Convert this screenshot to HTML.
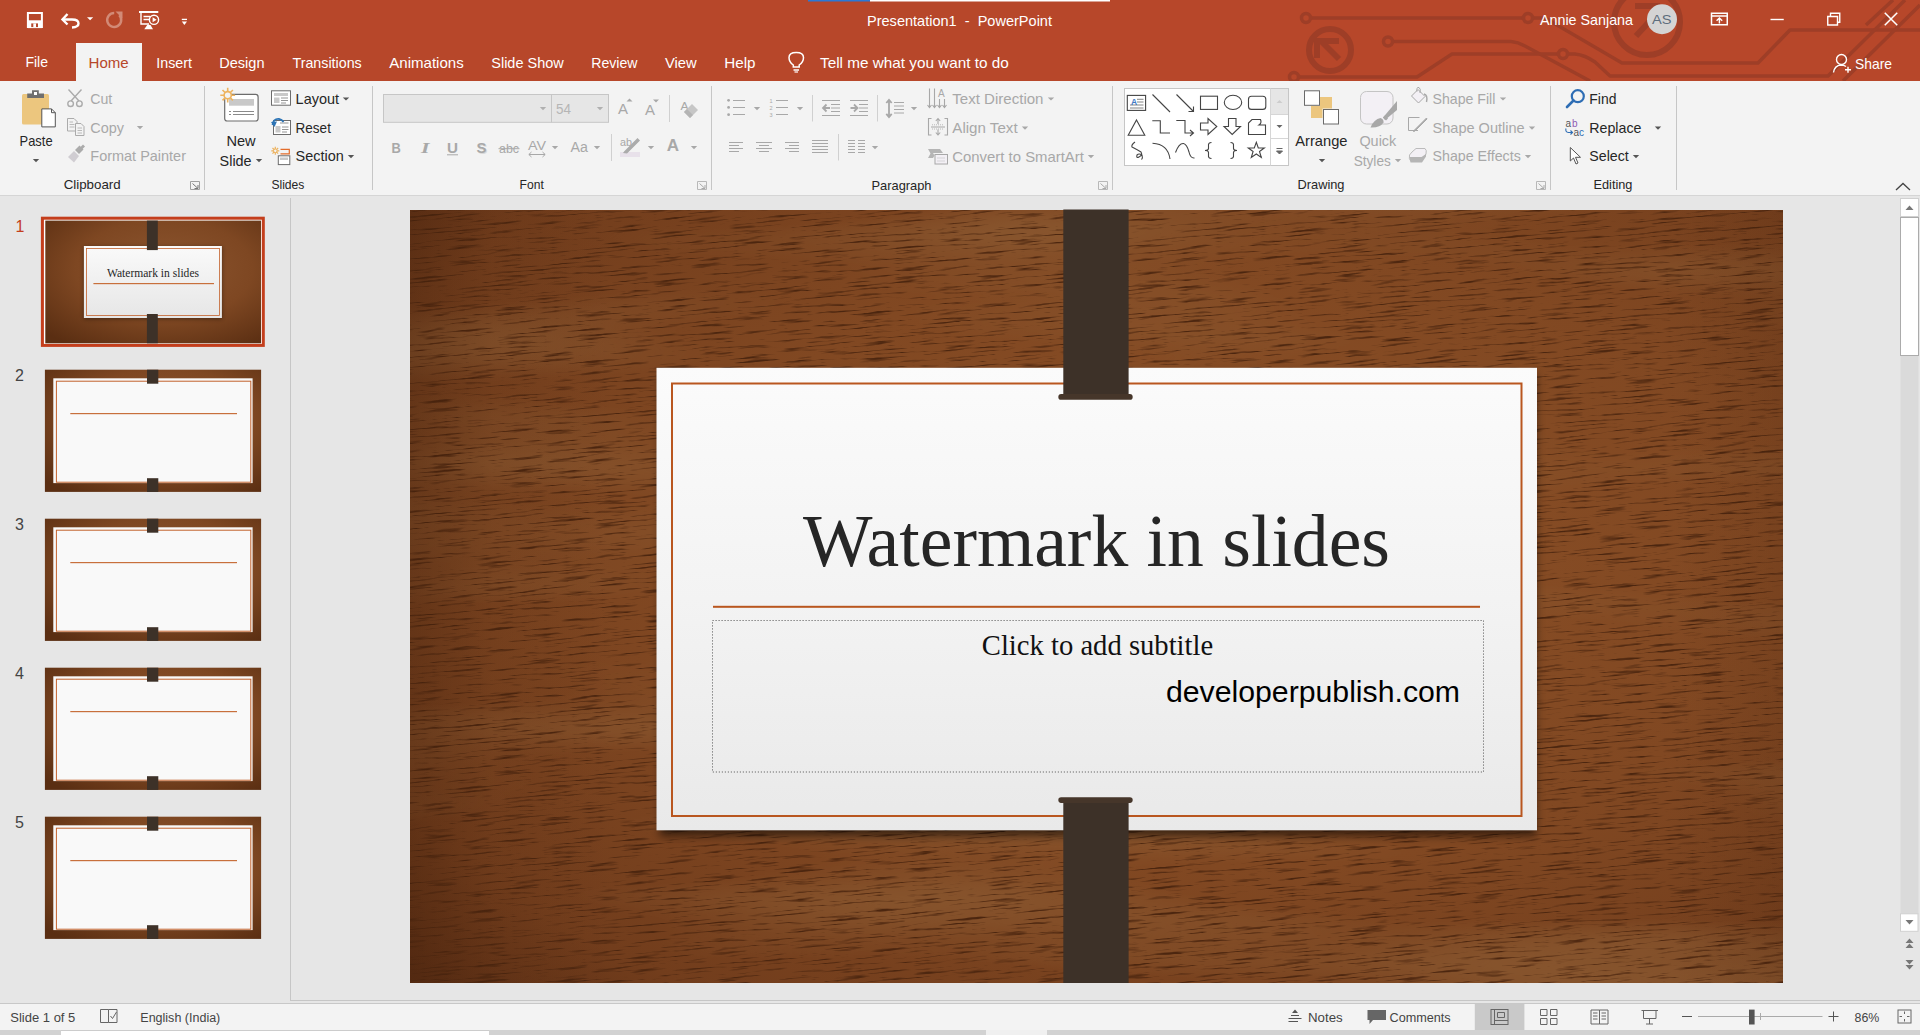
<!DOCTYPE html>
<html><head><meta charset="utf-8">
<style>
*{margin:0;padding:0;box-sizing:border-box}
html,body{width:1920px;height:1035px;overflow:hidden;background:#e6e6e6;font-family:"Liberation Sans",sans-serif}
.a{position:absolute}
#tb{left:0;top:0;width:1920px;height:81px;background:#b7472a}
#rib{left:0;top:81px;width:1920px;height:115px;background:#f3f3f3;border-bottom:1px solid #d5d5d5}
#main{left:0;top:196px;width:1920px;height:808px;background:#e6e6e6}
#status{left:0;top:1003px;width:1920px;height:27px;background:#f3f3f3;border-top:1px solid #c8c8c8}
#bot{left:0;top:1030px;width:1920px;height:5px;background:#d4d4d4}
.wt{color:#fff;font-size:14.5px;white-space:nowrap}
.tab{top:54px;color:#fff;font-size:14.5px;white-space:nowrap}
.rt{font-size:14.5px;color:#262626;white-space:nowrap}
.dis{color:#a6a6a6}
.gl{font-size:14.5px;color:#444;white-space:nowrap;top:177px}
.sep{top:86px;width:1px;height:104px;background:#d8d8d8}
.dd{width:0;height:0;border-left:3.5px solid transparent;border-right:3.5px solid transparent;border-top:3.5px solid #666}
.ddd{width:0;height:0;border-left:3.5px solid transparent;border-right:3.5px solid transparent;border-top:3.5px solid #b0b0b0}
</style></head><body>

<div id="tb" class="a">
<svg class="a" style="left:0;top:0" width="1920" height="81">
 <g fill="none" stroke="#9e3e27" stroke-width="3.5" stroke-linejoin="round">
  <path d="M1310 18 H1524 M1532 18 H1545 L1622 63 H1758 L1790 30 H1920"/>
  <circle cx="1306" cy="18" r="4.5"/><circle cx="1528" cy="18" r="4.5"/>
  <path d="M1392 41.5 H1511 Q1518 42 1525 46 L1590 81"/>
  <circle cx="1388" cy="41.5" r="4.5"/>
  <path d="M1298 77 H1417 L1452 54 H1559 M1567 54 H1575 Q1585 55 1595 62 L1610 76 H1828 L1905 0"/>
  <circle cx="1294" cy="77" r="4.5"/><circle cx="1563" cy="54" r="4.5"/>
  <circle cx="1330" cy="50" r="21" stroke-width="6"/>
  <path d="M1320 40 L1339 59" stroke-width="6"/>
  <path d="M1317 58 V41 H1339" stroke-width="6" stroke-linejoin="miter"/>
  <circle cx="1647" cy="22" r="33" stroke-width="6"/>
  <path d="M1636 36 L1660 10 M1635 6 H1660" stroke-width="6"/>
  <path d="M1843 81 L1920 5 M1866 25 L1893 0"/>
 </g>
 <rect x="76" y="43" width="66" height="38" fill="#f3f3f3"/>
 <rect x="808" y="0" width="62" height="1.5" fill="#2b78d4"/>
 <rect x="870" y="0" width="240" height="1.5" fill="#fff"/>
 <circle cx="1662" cy="19.25" r="15" fill="#d4d4d4"/>
 <g font-family="Liberation Sans" fill="#fff">
  <text x="867" y="25.75" font-size="14.5" textLength="185" lengthAdjust="spacingAndGlyphs">Presentation1&#160; - &#160;PowerPoint</text>
  <text x="1540" y="25" font-size="14.5" textLength="93" lengthAdjust="spacingAndGlyphs">Annie Sanjana</text>
  <text x="1652" y="24" font-size="12.5" fill="#5d6d7c" textLength="19.5" lengthAdjust="spacingAndGlyphs">AS</text>
  <text x="25.4" y="67.3" font-size="14.5" textLength="22.6" lengthAdjust="spacingAndGlyphs">File</text>
  <text x="88.5" y="67.5" font-size="14.5" fill="#b7472a" textLength="40.2" lengthAdjust="spacingAndGlyphs">Home</text>
  <text x="156.25" y="67.5" font-size="14.5" textLength="35.75" lengthAdjust="spacingAndGlyphs">Insert</text>
  <text x="219.25" y="67.5" font-size="14.5" textLength="45.25" lengthAdjust="spacingAndGlyphs">Design</text>
  <text x="292.5" y="67.5" font-size="14.5" textLength="69.25" lengthAdjust="spacingAndGlyphs">Transitions</text>
  <text x="389.25" y="67.5" font-size="14.5" textLength="74.5" lengthAdjust="spacingAndGlyphs">Animations</text>
  <text x="491.25" y="67.5" font-size="14.5" textLength="72.5" lengthAdjust="spacingAndGlyphs">Slide Show</text>
  <text x="591.25" y="67.5" font-size="14.5" textLength="46.25" lengthAdjust="spacingAndGlyphs">Review</text>
  <text x="665" y="67.5" font-size="14.5" textLength="31.75" lengthAdjust="spacingAndGlyphs">View</text>
  <text x="724.25" y="67.5" font-size="14.5" textLength="31.25" lengthAdjust="spacingAndGlyphs">Help</text>
  <text x="820" y="67.5" font-size="14.5" textLength="188.75" lengthAdjust="spacingAndGlyphs">Tell me what you want to do</text>
  <text x="1855" y="69.25" font-size="14.5" textLength="37" lengthAdjust="spacingAndGlyphs">Share</text>
 </g>
 <g fill="none" stroke="#fff">
  <!-- save -->
  <path d="M27.9 13 H41.9 V27.1 H27.9 Z" stroke-width="2"/>
  <rect x="27.9" y="20.3" width="14" height="7.8" fill="#fff" stroke="none"/>
  <rect x="31.25" y="23.4" width="6.75" height="3.7" fill="#b7472a" stroke="none"/>
  <rect x="33.3" y="23.4" width="2.7" height="3.7" fill="#fff" stroke="none"/>
  <!-- undo -->
  <path d="M63.5 19.5 H72 Q78.5 19.5 78.5 23.5 Q78.5 27 72 27.5" stroke-width="2.4"/>
  <path d="M67.5 14 L62.5 19.5 L67.5 24.5" stroke-width="2.4"/>
  <path d="M87 17.2 H93.2 L90.1 20.3 Z" fill="#fff" stroke="none"/>
  <!-- redo disabled -->
  <path d="M114.2 13 A7 7 0 1 0 119.3 15.2" stroke="#d28a76" stroke-width="2.5"/>
  <path d="M115.5 11.5 H122.5 V18.5 Z" fill="#d28a76" stroke="none"/>
  <!-- present -->
  <rect x="139" y="11" width="19.3" height="2" fill="#fff" stroke="none"/>
  <path d="M141 13 V24 H149 M143.5 16.5 H150 M143.5 19.5 H149" stroke-width="1.4"/>
  <circle cx="154" cy="19.8" r="4.6" stroke-width="1.4"/>
  <path d="M152.6 17.3 L156.6 19.8 L152.6 22.3 Z" fill="#fff" stroke="none"/>
  <path d="M147.5 24.5 L144.3 29.2 H153 L150.5 25" fill="#fff" stroke="none"/>
  <!-- customize -->
  <rect x="181.8" y="18.75" width="5.2" height="1.3" fill="#fff" stroke="none"/>
  <path d="M181.8 21.5 H187 L184.4 25 Z" fill="#fff" stroke="none"/>
  <!-- lightbulb -->
  <path d="M793.3 67 V65 Q789 62 789 57.5 Q789 52.5 796.25 52.5 Q803.5 52.5 803.5 57.5 Q803.5 62 799.2 65 V67 Z" stroke-width="1.5"/>
  <path d="M793.5 70 H799" stroke-width="1.5"/>
  <path d="M794.5 72 H798" stroke-width="1.2"/>
  <!-- window controls -->
  <path d="M1711.5 13.25 H1727.25 V24.75 H1711.5 Z M1711.5 16 H1727.25" stroke-width="1.5"/>
  <path d="M1719.4 23.5 V18 M1716.6 20.8 L1719.4 18 L1722.2 20.8" stroke-width="1.4"/>
  <path d="M1770.5 19.5 H1783.75" stroke-width="1.4"/>
  <path d="M1827.75 16.5 H1837.5 V25 H1827.75 Z M1830.5 16.5 V13.25 H1839.75 V22.25 H1837.5" stroke-width="1.4"/>
  <path d="M1884.75 12.75 L1897.25 25.25 M1897.25 12.75 L1884.75 25.25" stroke-width="1.5"/>
  <!-- share person -->
  <circle cx="1841.5" cy="59.5" r="5" stroke-width="1.4"/>
  <path d="M1833.5 72.5 Q1834.5 65.5 1841 65 Q1844 65 1846 66.5" stroke-width="1.4"/>
  <path d="M1845 69.75 H1851 M1848 66.75 V72.75" stroke-width="1.4"/>
 </g>
</svg>
</div>
<div id="rib" class="a">
<svg class="a" style="left:0;top:0" width="1920" height="115" viewBox="0 81 1920 115">
<g id="clip">
 <rect x="22" y="94" width="27" height="30.4" rx="1.5" fill="#ecc67e"/>
 <path d="M27.2 98 V93.6 H32 V90.3 H38.8 V93.6 H44 V98 Z" fill="#6f6f6f"/>
 <rect x="34" y="92" width="3" height="3" fill="#fff"/>
 <path d="M41.8 108.9 H51.5 L55.3 112.7 V126.9 H41.8 Z" fill="#fff" stroke="#555" stroke-width="1"/>
 <path d="M51.5 108.9 V112.7 H55.3" fill="none" stroke="#555" stroke-width="1"/>
 <g fill="none" stroke="#ababab" stroke-width="1.4">
  <path d="M68.5 89.5 L79 101 M81.5 89.5 L71 101"/>
  <circle cx="70.6" cy="103.7" r="2.8"/><circle cx="79.4" cy="103.7" r="2.8"/>
 </g>
 <g fill="#f3f3f3" stroke="#ababab" stroke-width="1">
  <path d="M67.5 118.5 H74 L77 121.5 V131 H67.5 Z"/>
  <path d="M75.5 123.5 H81 L84 126.5 V135.5 H75.5 Z"/>
 </g>
 <path d="M69.5 122 H73 M69.5 124.5 H74.5 M69.5 127 H74.5 M77.5 128 H82 M77.5 130.5 H82 M77.5 133 H82" stroke="#ababab" stroke-width="0.8"/>
 <path d="M68 157 L74 151 L79 156 L74 162.5 Z" fill="#d0cdd2"/>
 <path d="M75 150 L79.5 145.5 L83.5 149.5 L79 154 Z" fill="#ababab"/>
 <path d="M79.5 148 L83 144.5 L85 146.5 L81.5 150 Z" fill="#ababab"/>
 <path d="M190.5 181.5 H199.5 V189.5 H190.5 Z" fill="none" stroke="#a0a0a0" stroke-width="1"/>
 <path d="M192.5 183.5 L198 188.5 M198 185 V188.5 H194.5" fill="none" stroke="#777" stroke-width="1"/>
</g>
<g id="slides">
 <rect x="224.7" y="94.4" width="33.4" height="26.6" rx="2.5" fill="#fff" stroke="#6c6c6c" stroke-width="1.2"/>
 <rect x="229" y="99" width="25" height="6.7" fill="#c9c9c9"/>
 <path d="M233 111.5 H254 M233 114.5 H254 M229 111.5 H231 M229 114.5 H231" stroke="#8a8a8a" stroke-width="1"/>
 <g stroke="#edb35f" stroke-width="1.6">
  <path d="M227.7 87.8 V102.6 M220.3 95.2 H235.1 M222.5 90 L232.9 100.4 M232.9 90 L222.5 100.4"/>
 </g>
 <circle cx="227.7" cy="95.2" r="3.6" fill="#f3f3f3" stroke="#edb35f" stroke-width="1.6"/>
 <rect x="271.5" y="90.8" width="19" height="14.4" fill="#fff" stroke="#6c6c6c" stroke-width="1"/>
 <rect x="274" y="93" width="14" height="3" fill="#c9c9c9"/>
 <rect x="274" y="97.5" width="5.5" height="5.5" fill="#c9c9c9"/>
 <path d="M281 98 H288 M281 100.5 H288 M281 103 H286" stroke="#888" stroke-width="0.9"/>
 <rect x="273.5" y="120.5" width="17" height="14" fill="#fff" stroke="#6c6c6c" stroke-width="1"/>
 <rect x="275.5" y="126" width="5" height="6.5" fill="#c9c9c9"/>
 <path d="M282 127 H288.5 M282 129.5 H288.5 M282 132 H287 M280 123 H288.5" stroke="#888" stroke-width="0.9"/>
 <path d="M272.5 125 Q273.5 118.5 279 119 Q282 119.5 283.5 122" fill="none" stroke="#2e75b6" stroke-width="1.8"/>
 <path d="M271 122 L274.5 127 L277 121.5 Z" fill="#2e75b6"/>
 <g stroke="#edb35f" stroke-width="1.2"><path d="M275.3 146.8 V154.8 M271.3 150.8 H279.3 M272.5 148 L278.1 153.6 M278.1 148 L272.5 153.6"/></g>
 <circle cx="275.3" cy="150.8" r="1.8" fill="#f3f3f3" stroke="#edb35f" stroke-width="1"/>
 <path d="M280.5 149.3 H289.3 V153.8 H280.5" fill="none" stroke="#e36c2a" stroke-width="1.2"/>
 <rect x="278.3" y="155.8" width="11.5" height="8.8" fill="#fff" stroke="#6c6c6c" stroke-width="1"/>
 <rect x="280" y="157.5" width="8" height="2.5" fill="#c9c9c9"/>
</g>
<g id="font">
 <rect x="383.5" y="94.5" width="225" height="27.8" fill="#e6e6e6" stroke="#c6c6c6" stroke-width="1"/>
 <path d="M551.5 94.5 V122.3" stroke="#c6c6c6" stroke-width="1"/>
 <g fill="#a8a8a8" font-family="Liberation Sans">
  <text x="618" y="114" font-size="14.5" textLength="10" lengthAdjust="spacingAndGlyphs">A</text>
  <path d="M626.5 101.5 L629.5 98.5 L632.5 101.5 Z"/>
  <text x="645" y="114.5" font-size="14" textLength="10" lengthAdjust="spacingAndGlyphs">A</text>
  <path d="M653 99.5 H659 L656 102.5 Z"/>
  <text x="680.5" y="109.5" font-size="10" textLength="8" lengthAdjust="spacingAndGlyphs">A</text>
  <text x="391.6" y="153" font-size="15" font-weight="bold" textLength="9.3" lengthAdjust="spacingAndGlyphs">B</text>
  <text x="421" y="153" font-size="15" font-style="italic" font-family="Liberation Serif" font-weight="bold" textLength="8.5" lengthAdjust="spacingAndGlyphs">I</text>
  <text x="447" y="152.5" font-size="15" font-weight="bold" textLength="11" lengthAdjust="spacingAndGlyphs">U</text>
  <text x="477.5" y="154" font-size="15" font-weight="bold" fill="#dadada" textLength="10" lengthAdjust="spacingAndGlyphs">S</text>
  <text x="476.6" y="152.5" font-size="15" font-weight="bold" textLength="10" lengthAdjust="spacingAndGlyphs">S</text>
  <text x="499" y="153" font-size="12" textLength="20" lengthAdjust="spacingAndGlyphs">abc</text>
  <text x="528" y="149.5" font-size="13" textLength="18" lengthAdjust="spacingAndGlyphs">AV</text>
  <text x="570.6" y="152" font-size="14" textLength="17.4" lengthAdjust="spacingAndGlyphs">Aa</text>
  <text x="620" y="146" font-size="11" textLength="12" lengthAdjust="spacingAndGlyphs">ab</text>
  <text x="666.7" y="151" font-size="17" font-weight="bold" textLength="12.3" lengthAdjust="spacingAndGlyphs">A</text>
 </g>
 <path d="M447 154.8 H458 M498.5 148.7 H519.5" stroke="#a8a8a8" stroke-width="1"/>
 <path d="M529 154.5 H545 M531.5 152 L528.8 154.5 L531.5 157 M542.5 152 L545.2 154.5 L542.5 157" fill="none" stroke="#a8a8a8" stroke-width="1"/>
 <path d="M684 112 L692 104 L698 110 L690 118 Z" fill="#c6c6c6"/>
 <path d="M684 112 L687 109 L693 115 L690 118 Z" fill="#b4b4b4"/>
 <rect x="669" y="95" width="1" height="27" fill="#d0d0d0"/>
 <rect x="611" y="134" width="1" height="27" fill="#d0d0d0"/>
 <rect x="620" y="152" width="20" height="5" fill="#e8e1ea"/>
 <path d="M624.5 151 L637.5 138 L640 140.5 L627 153.5 Z M624.5 151 L623 153 L627 153.5" fill="#ababab"/>
 <path d="M697.5 181.5 H706.5 V189.5 H697.5 Z" fill="none" stroke="#b8b8b8" stroke-width="1"/>
 <path d="M699.5 183.5 L705 188.5 M705 185 V188.5 H701.5" fill="none" stroke="#aaa" stroke-width="1"/>
</g>
<g id="para" fill="none" stroke="#a8a8a8" stroke-width="1">
 <g fill="#a8a8a8" stroke="none"><circle cx="728.6" cy="100.3" r="1.4"/><circle cx="728.6" cy="107.4" r="1.4"/><circle cx="728.6" cy="114.7" r="1.4"/></g>
 <path d="M733 100.5 H745 M733 107.5 H745 M733 114.5 H745"/>
 <g fill="#a8a8a8" stroke="none" font-family="Liberation Sans" font-size="5.5"><text x="769.5" y="102.5">1</text><text x="769.5" y="109.5">2</text><text x="769.5" y="116.5">3</text></g>
 <path d="M776 100.5 H788 M776 107.5 H788 M776 114.5 H788"/>
 <path d="M812.5 95 V121.5 M877.5 95 V121.5 M838.5 134 V160.5" stroke="#d0d0d0"/>
 <path d="M822 100.5 H840 M831 104.5 H840 M831 108 H840 M831 111.5 H840 M822 115.5 H840"/>
 <path d="M830 108 H823.5 M826.5 104.5 L823 108 L826.5 111.5" stroke-width="1.8"/>
 <path d="M850 100.5 H868 M859 104.5 H868 M859 108 H868 M859 111.5 H868 M850 115.5 H868"/>
 <path d="M850.5 108 H857 M854 104.5 L857.5 108 L854 111.5" stroke-width="1.8"/>
 <path d="M889 101 V116 M886.3 103 L889 99.8 L891.7 103 M886.3 113.8 L889 117 L891.7 113.8" stroke-width="1.8"/>
 <path d="M894 102.5 H904 M894 106 H904 M894 109.5 H904 M894 113 H904"/>
 <path d="M729 142.5 H743 M729 145.5 H739 M729 148.5 H743 M729 151.5 H739"/>
 <path d="M756 142.5 H772 M759 145.5 H769 M756 148.5 H772 M759 151.5 H769"/>
 <path d="M785 142.5 H799 M789 145.5 H799 M785 148.5 H799 M789 151.5 H799"/>
 <path d="M812 140.5 H828 M812 143.5 H828 M812 146.5 H828 M812 149.5 H828 M812 152.5 H828"/>
 <path d="M848 140.5 H855 M848 143.5 H855 M848 146.5 H855 M848 149.5 H855 M848 152.5 H855 M858 140.5 H865 M858 143.5 H865 M858 146.5 H865 M858 149.5 H865 M858 152.5 H865"/>
 <path d="M929.5 88.5 V107 M934.5 88.5 V107 M927.5 105 L929.5 107.5 L931.5 105 M932.5 105 L934.5 107.5 L936.5 105 M939.5 99 V107 M944.5 99 V107 M937.5 105 L939.5 107.5 L941.5 105 M942.5 105 L944.5 107.5 L946.5 105" stroke-width="1.1"/>
 <text x="938" y="97" font-family="Liberation Sans" font-size="10" fill="#a8a8a8" stroke="none">A</text>
 <path d="M931.5 118.5 H928.5 V135 H931.5 M944.5 118.5 H947.5 V135 H944.5" stroke-width="1.1"/>
 <path d="M938 119 V124 M935.8 121 L938 118.5 L940.2 121 M938 129.5 V135 M935.8 132.5 L938 135 L940.2 132.5 M931 127 H945" stroke-width="1.1"/>
 <path d="M932 124.8 H944 M932 129 H944" stroke-dasharray="1 1" stroke-width="0.8"/>
 <path d="M928 149 H940 L943 153 H933 L934.5 155.5 L933 158 H928 L930.5 153.5 Z" fill="#b5b5b5" stroke="none"/>
 <rect x="935" y="154.5" width="12.5" height="9.5" fill="#f3f0f5" stroke="#a8a8a8"/>
 <path d="M937.5 158 H945 M937.5 161 H945" stroke-dasharray="1 1" stroke-width="0.8"/>
 <path d="M1098.5 181.5 H1107.5 V189.5 H1098.5 Z" stroke="#b8b8b8"/>
 <path d="M1100.5 183.5 L1106 188.5 M1106 185 V188.5 H1102.5" stroke="#aaa"/>
</g>
<g id="draw">
 <rect x="1124.5" y="88.5" width="164" height="77" fill="#fff" stroke="#c6c6c6"/>
 <rect x="1271" y="89" width="17" height="25.5" fill="#e6e6e6"/>
 <path d="M1270.5 88.5 V165.5 M1271 114.5 H1288 M1271 138.5 H1288" stroke="#d6d6d6"/>
 <path d="M1276.5 103 L1279.5 100 L1282.5 103 Z" fill="#cdcdcd"/>
 <path d="M1276.5 125 H1282.5 L1279.5 128 Z" fill="#666"/>
 <path d="M1276.5 148.5 H1282.5 M1276.5 151 H1282.5 L1279.5 154 Z" fill="#666" stroke="#666" stroke-width="1"/>
 <g fill="none" stroke="#444" stroke-width="1.1">
  <rect x="1127.3" y="95.4" width="18.3" height="15"/>
  <path d="M1137 99.3 H1143.5 M1137 102 H1143.5 M1130 105 H1143.5 M1130 108 H1143.5" stroke="#777" stroke-width="0.9"/>
  <path d="M1152.5 94.5 L1170 112"/>
  <path d="M1176.5 94.5 L1193.5 111.5 M1193.5 106.5 V111.5 H1188.5"/>
  <rect x="1200.5" y="96.2" width="17" height="13.2"/>
  <ellipse cx="1233" cy="102.4" rx="8.7" ry="7.1"/>
  <rect x="1248.5" y="96.2" width="17.3" height="13.2" rx="3"/>
  <path d="M1136.5 120 L1144.8 135.2 H1128.2 Z"/>
  <path d="M1152.3 120.8 H1160.3 V133 H1170"/>
  <path d="M1176.3 120.5 H1185 V133 H1193.5 M1190 130 L1193.5 133 L1190 136"/>
  <path d="M1200.5 123 H1208 V118.5 L1216.8 126.5 L1208 134.5 V130 H1200.5 Z"/>
  <path d="M1228.5 118.5 H1236 V126.5 H1240.5 L1232.2 134.5 L1224 126.5 H1228.5 Z"/>
  <path d="M1252 119.5 H1260.5 Q1262 123 1259 125 H1265.5 V134.5 H1248.5 V123 Z"/>
  <path d="M1135 142 Q1131 145 1132 147 Q1136 149 1141 152 Q1143 155 1139 157 Q1136 158.5 1137 155 Q1139 153 1142 155 Q1143 158 1141.5 159.5"/>
  <path d="M1152.5 143.2 Q1168 144 1170 159"/>
  <path d="M1175.5 152.5 Q1179 143 1183.5 143.5 Q1187 144.5 1189 152 Q1190.5 158.5 1194.5 158"/>
  <path d="M1211.5 142.5 Q1208 142.5 1208.5 146 V148.5 Q1208.5 150.5 1205 150.5 Q1208.5 150.5 1208.5 152.5 V155 Q1208 158.5 1211.5 158.5"/>
  <path d="M1230.5 142.5 Q1234 142.5 1233.5 146 V148.5 Q1233.5 150.5 1237 150.5 Q1233.5 150.5 1233.5 152.5 V155 Q1234 158.5 1230.5 158.5"/>
  <path d="M1256.3 142.3 L1258.3 148 H1264.3 L1259.5 151.5 L1261.3 157.5 L1256.3 154 L1251.3 157.5 L1253.1 151.5 L1248.3 148 H1254.3 Z"/>
 </g>
 <text x="1131" y="105" font-family="Liberation Sans" font-weight="bold" font-size="8.5" fill="#3c78c3">A</text>
 <rect x="1304.5" y="90.8" width="15" height="14.5" fill="#fff" stroke="#6a6a6a" stroke-width="1"/>
 <rect x="1320" y="97" width="12" height="11.5" fill="#ecc67e"/>
 <rect x="1311" y="106" width="11.5" height="12" fill="#ecc67e"/>
 <rect x="1323.5" y="109.5" width="15" height="14.5" fill="#fff" stroke="#6a6a6a" stroke-width="1"/>
 <rect x="1360.5" y="91.5" width="32.5" height="32.5" rx="6" fill="#f3f0f5" stroke="#c4c4c4" stroke-width="1"/>
 <path d="M1397 101 V110 L1385 120 L1383 117.5 Z" fill="#a8a8a8"/>
 <path d="M1385 115.5 L1388 118.5 L1386 120.5 L1383 117.5 Z" fill="#a8a8a8"/>
 <path d="M1370.5 127.5 Q1374 119 1380.5 118 Q1384 119 1383.5 122.5 Q1380 128 1370.5 127.5 Z" fill="#a8a8a8"/>
 <g fill="none" stroke="#a8a8a8" stroke-width="1">
  <path d="M1411.5 96 L1418 89.5 L1425 96.5 L1418.5 103 Z" fill="#f3f0f5"/>
  <path d="M1417 91.5 Q1416 87 1419 87.5 Q1421 88.5 1420 93"/>
  <path d="M1424 94 Q1428 95 1426.5 102" stroke-width="1.4"/>
  <path d="M1419.5 117.5 H1408.5 V130.5 H1418"/>
  <path d="M1426.5 118 L1414.5 130 L1413.5 131.5 L1415 131 L1427 119 Z" fill="#a8a8a8"/>
  <path d="M1412 152 L1416 148.5 H1425 Q1427 150 1426 154 L1421.5 161.5 H1411 Q1408.5 159 1409.5 155 Z" fill="#f3f0f5" stroke="#bbb"/>
  <path d="M1409.5 157 H1421.5 L1426 154 V156.5 L1422 162.5 H1410.5 Z" fill="#b5b5b5" stroke="none"/>
 </g>
 <path d="M1536.5 181.5 H1545.5 V189.5 H1536.5 Z" fill="none" stroke="#b8b8b8" stroke-width="1"/>
 <path d="M1538.5 183.5 L1544 188.5 M1544 185 V188.5 H1540.5" fill="none" stroke="#aaa" stroke-width="1"/>
</g>
<g id="edit">
 <circle cx="1577.8" cy="96.2" r="6" fill="none" stroke="#2e6db4" stroke-width="2.2"/>
 <path d="M1573.5 100.5 L1567 107" stroke="#2e6db4" stroke-width="2.6" stroke-linecap="round"/>
 <text x="1565.5" y="126.5" font-family="Liberation Sans" font-size="10" fill="#555">a</text>
 <text x="1572" y="126.5" font-family="Liberation Sans" font-size="10" fill="#8e5cb4">b</text>
 <text x="1573.5" y="135.5" font-family="Liberation Sans" font-size="10" fill="#555">a</text>
 <text x="1579" y="135.5" font-family="Liberation Sans" font-size="10" fill="#2e6db4">c</text>
 <path d="M1566 128.5 Q1565 132 1568.5 132.5 H1572.5 M1570.5 130.5 L1572.5 132.5 L1570.5 134.5" fill="none" stroke="#2e6db4" stroke-width="1.1"/>
 <path d="M1570.3 147.5 V161 L1573.5 158 L1576 164 L1578 163 L1575.5 157.3 H1580.5 Z" fill="#fff" stroke="#555" stroke-width="1" stroke-linejoin="round"/>
 <path d="M1896 190 L1903 183.5 L1910 190" fill="none" stroke="#444" stroke-width="1.3"/>
</g>

<rect x="204.0" y="86" width="1" height="104" fill="#c6c6c6"/>
<rect x="372.0" y="86" width="1" height="104" fill="#c6c6c6"/>
<rect x="711.0" y="86" width="1" height="104" fill="#c6c6c6"/>
<rect x="1112.0" y="86" width="1" height="104" fill="#c6c6c6"/>
<rect x="1550.0" y="86" width="1" height="104" fill="#c6c6c6"/>
<rect x="1676.0" y="86" width="1" height="104" fill="#c6c6c6"/>
<text x="19.6" y="145.7" fill="#262626" font-size="14.5" textLength="33" lengthAdjust="spacingAndGlyphs" font-family="Liberation Sans">Paste</text>
<text x="90.3" y="103.7" fill="#a8a8a8" font-size="14.5" textLength="22" lengthAdjust="spacingAndGlyphs" font-family="Liberation Sans">Cut</text>
<text x="90.3" y="132.7" fill="#a8a8a8" font-size="14.5" textLength="33.7" lengthAdjust="spacingAndGlyphs" font-family="Liberation Sans">Copy</text>
<text x="90.3" y="161.3" fill="#a8a8a8" font-size="14.5" textLength="95.7" lengthAdjust="spacingAndGlyphs" font-family="Liberation Sans">Format Painter</text>
<text x="63.7" y="189.4" fill="#262626" font-size="13" textLength="57" lengthAdjust="spacingAndGlyphs" font-family="Liberation Sans">Clipboard</text>
<text x="226.4" y="145.7" fill="#262626" font-size="14.5" textLength="29.2" lengthAdjust="spacingAndGlyphs" font-family="Liberation Sans">New</text>
<text x="219.6" y="165.7" fill="#262626" font-size="14.5" textLength="32" lengthAdjust="spacingAndGlyphs" font-family="Liberation Sans">Slide</text>
<text x="295.6" y="103.7" fill="#262626" font-size="14.5" textLength="43.4" lengthAdjust="spacingAndGlyphs" font-family="Liberation Sans">Layout</text>
<text x="295.6" y="132.7" fill="#262626" font-size="14.5" textLength="35.3" lengthAdjust="spacingAndGlyphs" font-family="Liberation Sans">Reset</text>
<text x="295.6" y="161.3" fill="#262626" font-size="14.5" textLength="48.2" lengthAdjust="spacingAndGlyphs" font-family="Liberation Sans">Section</text>
<text x="271.4" y="189.4" fill="#262626" font-size="13" textLength="33" lengthAdjust="spacingAndGlyphs" font-family="Liberation Sans">Slides</text>
<text x="556" y="114" fill="#b5b5b5" font-size="14.5" textLength="15" lengthAdjust="spacingAndGlyphs" font-family="Liberation Sans">54</text>
<text x="519.6" y="189.4" fill="#262626" font-size="13" textLength="24.2" lengthAdjust="spacingAndGlyphs" font-family="Liberation Sans">Font</text>
<text x="952.3" y="103.5" fill="#a8a8a8" font-size="14.5" textLength="91.2" lengthAdjust="spacingAndGlyphs" font-family="Liberation Sans">Text Direction</text>
<text x="952.3" y="132.8" fill="#a8a8a8" font-size="14.5" textLength="65.3" lengthAdjust="spacingAndGlyphs" font-family="Liberation Sans">Align Text</text>
<text x="952.3" y="161.6" fill="#a8a8a8" font-size="14.5" textLength="131.6" lengthAdjust="spacingAndGlyphs" font-family="Liberation Sans">Convert to SmartArt</text>
<text x="871.5" y="189.6" fill="#262626" font-size="13" textLength="60" lengthAdjust="spacingAndGlyphs" font-family="Liberation Sans">Paragraph</text>
<text x="1295.3" y="145.7" fill="#262626" font-size="14.5" textLength="52.2" lengthAdjust="spacingAndGlyphs" font-family="Liberation Sans">Arrange</text>
<text x="1359.4" y="145.7" fill="#a8a8a8" font-size="14.5" textLength="36.9" lengthAdjust="spacingAndGlyphs" font-family="Liberation Sans">Quick</text>
<text x="1353.7" y="165.7" fill="#a8a8a8" font-size="14.5" textLength="37.1" lengthAdjust="spacingAndGlyphs" font-family="Liberation Sans">Styles</text>
<text x="1432.5" y="103.7" fill="#a8a8a8" font-size="14.5" textLength="62.8" lengthAdjust="spacingAndGlyphs" font-family="Liberation Sans">Shape Fill</text>
<text x="1432.5" y="132.7" fill="#a8a8a8" font-size="14.5" textLength="92.2" lengthAdjust="spacingAndGlyphs" font-family="Liberation Sans">Shape Outline</text>
<text x="1432.5" y="161.3" fill="#a8a8a8" font-size="14.5" textLength="88.3" lengthAdjust="spacingAndGlyphs" font-family="Liberation Sans">Shape Effects</text>
<text x="1297.5" y="189.4" fill="#262626" font-size="13" textLength="47" lengthAdjust="spacingAndGlyphs" font-family="Liberation Sans">Drawing</text>
<text x="1589.3" y="103.7" fill="#262626" font-size="14.5" textLength="27.1" lengthAdjust="spacingAndGlyphs" font-family="Liberation Sans">Find</text>
<text x="1589.3" y="132.7" fill="#262626" font-size="14.5" textLength="52.1" lengthAdjust="spacingAndGlyphs" font-family="Liberation Sans">Replace</text>
<text x="1589.3" y="161.3" fill="#262626" font-size="14.5" textLength="39.5" lengthAdjust="spacingAndGlyphs" font-family="Liberation Sans">Select</text>
<text x="1593.5" y="189.4" fill="#262626" font-size="13" textLength="38.9" lengthAdjust="spacingAndGlyphs" font-family="Liberation Sans">Editing</text>
<path d="M32.8 159 H39.2 L36 162.2 Z" fill="#555"/>
<path d="M136.8 126 H143.2 L140 129.2 Z" fill="#a8a8a8"/>
<path d="M255.8 159 H262.2 L259 162.2 Z" fill="#555"/>
<path d="M342.8 97.4 H349.2 L346 100.60000000000001 Z" fill="#555"/>
<path d="M347.8 155 H354.2 L351 158.2 Z" fill="#555"/>
<path d="M539.8 107 H546.2 L543 110.2 Z" fill="#b0b0b0"/>
<path d="M596.8 107 H603.2 L600 110.2 Z" fill="#b0b0b0"/>
<path d="M551.8 146 H558.2 L555 149.2 Z" fill="#a8a8a8"/>
<path d="M593.8 146 H600.2 L597 149.2 Z" fill="#a8a8a8"/>
<path d="M647.8 146 H654.2 L651 149.2 Z" fill="#a8a8a8"/>
<path d="M690.8 146 H697.2 L694 149.2 Z" fill="#a8a8a8"/>
<path d="M753.8 107 H760.2 L757 110.2 Z" fill="#a8a8a8"/>
<path d="M796.8 107 H803.2 L800 110.2 Z" fill="#a8a8a8"/>
<path d="M910.8 107 H917.2 L914 110.2 Z" fill="#a8a8a8"/>
<path d="M871.8 146 H878.2 L875 149.2 Z" fill="#a8a8a8"/>
<path d="M1047.8 97.4 H1054.2 L1051 100.60000000000001 Z" fill="#a8a8a8"/>
<path d="M1021.8 126.5 H1028.2 L1025 129.7 Z" fill="#a8a8a8"/>
<path d="M1087.8 155 H1094.2 L1091 158.2 Z" fill="#a8a8a8"/>
<path d="M1318.8 159 H1325.2 L1322 162.2 Z" fill="#555"/>
<path d="M1394.8 159 H1401.2 L1398 162.2 Z" fill="#a8a8a8"/>
<path d="M1499.8 97.4 H1506.2 L1503 100.60000000000001 Z" fill="#a8a8a8"/>
<path d="M1528.8 126.5 H1535.2 L1532 129.7 Z" fill="#a8a8a8"/>
<path d="M1524.8 155 H1531.2 L1528 158.2 Z" fill="#a8a8a8"/>
<path d="M1654.8 126.5 H1661.2 L1658 129.7 Z" fill="#555"/>
<path d="M1632.8 155 H1639.2 L1636 158.2 Z" fill="#555"/>
</svg></div>
<div id="main" class="a">
<svg class="a" style="left:0;top:0" width="1920" height="807" viewBox="0 196 1920 807">
<defs>
 <radialGradient id="woodg" cx="0.6" cy="0.45" r="0.8">
  <stop offset="0" stop-color="#8a4f26"/>
  <stop offset="0.5" stop-color="#814822"/>
  <stop offset="0.85" stop-color="#723d1c"/>
  <stop offset="1" stop-color="#5e3015"/>
 </radialGradient>
 <linearGradient id="woodl" x1="0" y1="0" x2="1" y2="0">
  <stop offset="0" stop-color="#3a1a08" stop-opacity="0.3"/>
  <stop offset="0.06" stop-color="#3a1a08" stop-opacity="0.08"/>
  <stop offset="0.15" stop-color="#3a1a08" stop-opacity="0"/>
  <stop offset="0.92" stop-color="#3a1a08" stop-opacity="0"/>
  <stop offset="1" stop-color="#3a1a08" stop-opacity="0.12"/>
 </linearGradient>
 <filter id="grain" x="0" y="0" width="100%" height="100%" color-interpolation-filters="sRGB">
  <feTurbulence type="fractalNoise" baseFrequency="0.025 0.5" numOctaves="3" seed="7" result="n"/>
  <feColorMatrix in="n" type="matrix" values="0 0 0 0 0.3  0 0 0 0 0.15  0 0 0 0 0.06  -4.5 0 0 0 2.1"/>
 </filter>
 <filter id="band" x="0" y="0" width="100%" height="100%" color-interpolation-filters="sRGB">
  <feTurbulence type="fractalNoise" baseFrequency="0.0015 0.012" numOctaves="2" seed="11" result="n"/>
  <feColorMatrix in="n" type="matrix" values="0 0 0 0 0.55  0 0 0 0 0.36  0 0 0 0 0.2  2.2 0 0 0 -1.05"/>
 </filter>
 <linearGradient id="cardg" x1="0" y1="0" x2="0" y2="1">
  <stop offset="0" stop-color="#fbfbfb"/>
  <stop offset="0.5" stop-color="#f3f3f3"/>
  <stop offset="1" stop-color="#e9e9e9"/>
 </linearGradient>
 <filter id="shad" x="-10%" y="-10%" width="120%" height="130%">
  <feGaussianBlur stdDeviation="4"/>
 </filter>
</defs>
<rect x="290" y="198" width="1" height="803" fill="#c6c6c6"/>
<rect x="291" y="1000" width="1629" height="1" fill="#c6c6c6"/>
<!-- slide -->
<g>
 <rect x="410" y="210" width="1373" height="773" fill="url(#woodg)"/>
 <rect x="410" y="210" width="1373" height="773" filter="url(#band)"/>
 <clipPath id="sclip"><rect x="410" y="210" width="1373" height="773"/></clipPath><g clip-path="url(#sclip)"><rect x="330" y="120" width="1540" height="950" filter="url(#grain)" transform="rotate(-5 1096 596)"/></g>
 <rect x="410" y="210" width="1373" height="773" fill="url(#woodl)"/>
 <rect x="660" y="374" width="876" height="462" fill="#000" opacity="0.55" filter="url(#shad)"/>
 <rect x="656.5" y="367.8" width="880.5" height="462.5" fill="url(#cardg)"/>
 <rect x="672" y="383.5" width="849.5" height="432.5" fill="none" stroke="#b9561f" stroke-width="2"/>
 <rect x="713" y="605.8" width="767" height="2" fill="#b9561f"/>
 <rect x="712.5" y="620.5" width="771" height="151.5" fill="none" stroke="#6a6a6a" stroke-width="1" stroke-dasharray="1.2 1.8"/>
 <text x="803" y="565.5" font-family="Liberation Serif" font-size="73" fill="#262626" textLength="587" lengthAdjust="spacingAndGlyphs">Watermark in slides</text>
 <text x="981.8" y="654.9" font-family="Liberation Serif" font-size="28.7" fill="#111" textLength="231.4" lengthAdjust="spacingAndGlyphs">Click to add subtitle</text>
 <text x="1166" y="701.9" font-family="Liberation Sans" font-size="30" fill="#000" textLength="294" lengthAdjust="spacingAndGlyphs">developerpublish.com</text>
 <rect x="1063.3" y="209.5" width="65.3" height="188" fill="#3d3128"/>
 <rect x="1058.3" y="394" width="74.4" height="5.8" rx="2.9" fill="#46362a"/>
 <rect x="1063.3" y="800" width="65.3" height="183" fill="#3d3128"/>
 <rect x="1058.3" y="797.3" width="74.4" height="5.6" rx="2.8" fill="#46362a"/>
</g>
<!-- scrollbar -->
<rect x="1900.5" y="198.5" width="18" height="18" fill="#fff" stroke="#d0d0d0"/>
<path d="M1905.5 210 L1909.5 205.5 L1913.5 210 Z" fill="#777"/>
<rect x="1900.5" y="217" width="18" height="697" fill="#dadada"/>
<rect x="1900.5" y="217.5" width="18" height="138" fill="#fff" stroke="#ababab"/>
<rect x="1900.5" y="913.8" width="17.5" height="17.5" fill="#fff" stroke="#d0d0d0"/>
<path d="M1905.5 920 H1913.5 L1909.5 924.5 Z" fill="#777"/>
<path d="M1905.5 943 L1909.5 938.5 L1913.5 943 Z M1905.5 948 L1909.5 943.5 L1913.5 948 Z" fill="#777"/>
<path d="M1905.5 960 H1913.5 L1909.5 964.5 Z M1905.5 965 H1913.5 L1909.5 969.5 Z" fill="#777"/>
</svg>
</div>
<div class="a" style="left:0;top:196px;width:290px;height:804px">
<svg class="a" style="left:0;top:0" width="290" height="804" viewBox="0 196 290 804">
<defs><filter id="tshad" x="-10%" y="-10%" width="120%" height="130%"><feGaussianBlur stdDeviation="2"/></filter></defs>
<defs>
 <radialGradient id="twood" cx="0.55" cy="0.4" r="0.75">
  <stop offset="0" stop-color="#8c5630"/>
  <stop offset="0.55" stop-color="#7e4722"/>
  <stop offset="1" stop-color="#5a2e12"/>
 </radialGradient>
 <linearGradient id="tcard" x1="0" y1="0" x2="0" y2="1">
  <stop offset="0" stop-color="#fafafa"/><stop offset="1" stop-color="#e6e6e6"/>
 </linearGradient>
 
</defs>
<text x="15.5" y="231.5" font-family="Liberation Sans" font-size="16" fill="#c43e1c">1</text>
<text x="15" y="381" font-family="Liberation Sans" font-size="16" fill="#444">2</text>
<text x="15" y="530" font-family="Liberation Sans" font-size="16" fill="#444">3</text>
<text x="15" y="679" font-family="Liberation Sans" font-size="16" fill="#444">4</text>
<text x="15" y="828" font-family="Liberation Sans" font-size="16" fill="#444">5</text>
<rect x="42.4" y="218.2" width="220.9" height="127.2" fill="#fff" stroke="#c43e1c" stroke-width="3"/>
<rect x="45.3" y="220.6" width="215.7" height="122.7" fill="url(#twood)"/>
<rect x="84" y="247" width="138" height="72" fill="#000" opacity="0.4" filter="url(#tshad)"/>
<rect x="83.9" y="246" width="138" height="72" fill="url(#tcard)"/>
<rect x="86.5" y="248.5" width="133" height="67" fill="none" stroke="#c2612c" stroke-width="0.8"/>
<rect x="93.4" y="283" width="120.6" height="1.2" fill="#c8703c"/>
<text x="107" y="277" font-family="Liberation Serif" font-size="11.5" fill="#262626" textLength="92" lengthAdjust="spacingAndGlyphs">Watermark in slides</text>
<rect x="146.9" y="220.6" width="10.9" height="29.5" fill="#3d3128"/>
<rect x="146.9" y="314" width="10.9" height="29.3" fill="#3d3128"/>
<g transform="translate(44.9 369.7)">
  <rect x="0" y="0" width="216.2" height="122.2" fill="url(#twood)"/>
  <rect x="8.4" y="8.6" width="199.3" height="104.8" fill="#f9f9f9"/>
  <rect x="11.5" y="11.5" width="194.4" height="101" fill="none" stroke="#c2612c" stroke-width="1"/>
  <rect x="25.4" y="43.3" width="166.7" height="1.2" fill="#c8703c"/>
  <rect x="102.1" y="0" width="11.3" height="14" fill="#3d3128"/>
  <rect x="102.1" y="108.5" width="11.3" height="13.7" fill="#3d3128"/>
 </g>
<g transform="translate(44.9 518.7)">
  <rect x="0" y="0" width="216.2" height="122.2" fill="url(#twood)"/>
  <rect x="8.4" y="8.6" width="199.3" height="104.8" fill="#f9f9f9"/>
  <rect x="11.5" y="11.5" width="194.4" height="101" fill="none" stroke="#c2612c" stroke-width="1"/>
  <rect x="25.4" y="43.3" width="166.7" height="1.2" fill="#c8703c"/>
  <rect x="102.1" y="0" width="11.3" height="14" fill="#3d3128"/>
  <rect x="102.1" y="108.5" width="11.3" height="13.7" fill="#3d3128"/>
 </g>
<g transform="translate(44.9 667.7)">
  <rect x="0" y="0" width="216.2" height="122.2" fill="url(#twood)"/>
  <rect x="8.4" y="8.6" width="199.3" height="104.8" fill="#f9f9f9"/>
  <rect x="11.5" y="11.5" width="194.4" height="101" fill="none" stroke="#c2612c" stroke-width="1"/>
  <rect x="25.4" y="43.3" width="166.7" height="1.2" fill="#c8703c"/>
  <rect x="102.1" y="0" width="11.3" height="14" fill="#3d3128"/>
  <rect x="102.1" y="108.5" width="11.3" height="13.7" fill="#3d3128"/>
 </g>
<g transform="translate(44.9 816.7)">
  <rect x="0" y="0" width="216.2" height="122.2" fill="url(#twood)"/>
  <rect x="8.4" y="8.6" width="199.3" height="104.8" fill="#f9f9f9"/>
  <rect x="11.5" y="11.5" width="194.4" height="101" fill="none" stroke="#c2612c" stroke-width="1"/>
  <rect x="25.4" y="43.3" width="166.7" height="1.2" fill="#c8703c"/>
  <rect x="102.1" y="0" width="11.3" height="14" fill="#3d3128"/>
  <rect x="102.1" y="108.5" width="11.3" height="13.7" fill="#3d3128"/>
 </g>
</svg>
</div>
<div id="status" class="a">
<svg class="a" style="left:0;top:-1px" width="1920" height="32" viewBox="0 1003 1920 32">
<g font-family="Liberation Sans" font-size="12.5" fill="#444">
 <text x="10.3" y="1021.7" textLength="65" lengthAdjust="spacingAndGlyphs">Slide 1 of 5</text>
 <text x="140.3" y="1021.7" textLength="80" lengthAdjust="spacingAndGlyphs">English (India)</text>
 <text x="1308" y="1021.7" textLength="34.7" lengthAdjust="spacingAndGlyphs">Notes</text>
 <text x="1389.5" y="1021.7" textLength="61.2" lengthAdjust="spacingAndGlyphs">Comments</text>
 <text x="1854.5" y="1021.7" textLength="24.8" lengthAdjust="spacingAndGlyphs">86%</text>
</g>
<g fill="none" stroke="#555" stroke-width="1">
 <path d="M100.5 1009.5 H108.5 V1022.5 H100.5 Z M108.5 1009.5 H117 V1022.5 H108.5" stroke="#666"/>
 <path d="M110.5 1016 L112.5 1018.5 L116.5 1012" stroke="#666"/>
 <path d="M1291 1015.5 H1299 M1288.5 1018.5 H1301.5 M1288.5 1021.5 H1298" stroke="#555"/>
 <path d="M1292 1013 L1295 1009.5 L1298 1013 Z" fill="#555" stroke="none"/>
 <rect x="1474.8" y="1003.6" width="49.6" height="26.4" fill="#c9c9c9" stroke="none"/>
 <rect x="1491" y="1009.5" width="17" height="15" stroke="#666"/>
 <path d="M1494.5 1009.5 V1024.5 M1494.5 1020.5 H1508 M1497.5 1012.5 H1504.5 V1017.5 H1497.5 Z" stroke="#666"/>
 <path d="M1540.5 1009.5 H1547 V1015.5 H1540.5 Z M1550.5 1009.5 H1557 V1015.5 H1550.5 Z M1540.5 1018.5 H1547 V1024.5 H1540.5 Z M1550.5 1018.5 H1557 V1024.5 H1550.5 Z" stroke="#666"/>
 <path d="M1591 1010 H1599.5 V1024 H1591 Z M1599.5 1010 H1608 V1024 H1599.5 M1593 1013 H1597.5 M1593 1016 H1597.5 M1593 1019 H1597.5 M1601.5 1013 H1606 M1601.5 1016 H1606 M1601.5 1019 H1606" stroke="#666"/>
 <path d="M1641.5 1010.5 H1658 M1643.5 1010.5 V1018.5 H1656 V1010.5 M1649.5 1018.5 V1024 M1646 1024 H1653" stroke="#666"/>
 <path d="M1682 1016.5 H1692" stroke="#555"/>
 <path d="M1698 1016.5 H1822.5" stroke="#aaa"/>
 <path d="M1760.5 1013 V1020" stroke="#aaa"/>
 <path d="M1828.5 1016.5 H1838.5 M1833.5 1011.5 V1021.5" stroke="#555"/>
 <rect x="1898" y="1010" width="13" height="13" stroke="#666"/>
 <path d="M1904.5 1011.5 V1014 M1904.5 1019 V1021.5 M1899.5 1016.5 H1902 M1907 1016.5 H1909.5" stroke="#666"/>
</g>
<rect x="1749" y="1009.6" width="5.6" height="14.9" fill="#555"/>
<path d="M1367.5 1010 H1386 V1020 H1373 L1369.5 1024 V1020 H1367.5 Z" fill="#666"/>
</svg>
</div>
<div class="a" style="left:0;top:1030px;width:1920px;height:5px;background:#d2d2d2"></div>
<div class="a" style="left:61px;top:1030px;width:428px;height:5px;background:#fff;border-top:1px solid #ccc"></div>
<div class="a" style="left:986px;top:1030px;width:61px;height:5px;background:#f0f0f0"></div>
</body></html>
